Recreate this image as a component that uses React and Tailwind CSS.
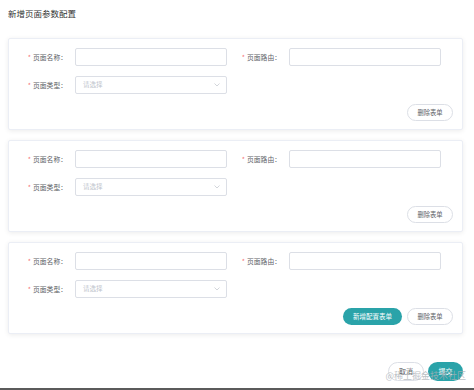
import React from 'react';

const font = { fontFamily: '"Noto Sans CJK SC", "Noto Sans", sans-serif' };

const Field = ({ label, children }) => (
  <div className="flex w-[214px] items-center">
    <label className="w-[62px] pr-[8px] text-right text-[6.8px] leading-[18px] text-[#606266] whitespace-nowrap">
      <span className="mr-[2px] text-[#f56c6c]">*</span>
      {label}：
    </label>
    {children}
  </div>
);

const TextInput = () => (
  <div className="h-[18px] w-[152px] rounded-[2px] border border-[#dcdfe6] bg-white" />
);

const SelectInput = () => (
  <div className="flex h-[18px] w-[152px] items-center justify-between rounded-[2px] border border-[#dcdfe6] bg-white pl-[7px] pr-[6px]">
    <span className="text-[6.5px] text-[#c0c4cc]">请选择</span>
    <svg width="6" height="4" viewBox="0 0 6 4" fill="none">
      <path d="M0.5 0.5 L3 3 L5.5 0.5" stroke="#c0c4cc" strokeWidth="0.7" />
    </svg>
  </div>
);

const FormCard = ({ last }) => (
  <div className="ml-2 mr-[11px] mb-[10px] h-[92px] rounded-[2px] border border-[#ebeef5] bg-white pl-[4px] pr-[9px] pt-[9px] shadow-[0_1px_5px_rgba(0,0,0,0.08)]">
    <div className="flex">
      <Field label="页面名称">
        <TextInput />
      </Field>
      <Field label="页面路由">
        <TextInput />
      </Field>
    </div>
    <div className="mt-[10px] flex">
      <Field label="页面类型">
        <SelectInput />
      </Field>
    </div>
    <div className="mt-[10px] flex justify-end gap-[5px]">
      {last && (
        <button className="h-[17px] w-[59px] rounded-full bg-[#2aa3a9] text-[6.5px] text-white">
          新增配置表单
        </button>
      )}
      <button className="h-[17px] w-[46px] rounded-full border border-[#dcdfe6] bg-white text-[6.3px] text-[#606266]">
        删除表单
      </button>
    </div>
  </div>
);

export default function App() {
  const forms = [1, 2, 3];
  return (
    <div className="relative flex h-[390px] w-[474px] flex-col bg-white" style={font}>
      <div className="h-[38px] pl-2 pt-[7px] text-[8.5px] leading-[13px] text-[#303133]">
        新增页面参数配置
      </div>
      {forms.map((f, i) => (
        <FormCard key={f} last={i === forms.length - 1} />
      ))}
      <div className="mt-auto flex justify-end gap-[4px] pr-[11px] pb-[7px]">
        <button className="h-[19px] w-[36px] rounded-full border border-[#dcdfe6] bg-white text-[7px] text-[#606266]">
          取消
        </button>
        <button className="h-[19px] w-[35px] rounded-full bg-[#2aa3a9] text-[7px] text-white">
          提交
        </button>
      </div>
      <div className="h-[2px] bg-[#5b5b5b]" />
      <span className="absolute right-[8px] bottom-[9px] text-[9px] leading-[10px] text-[#aab0b6]/80">
        @稀土掘金技术社区
      </span>
    </div>
  );
}
